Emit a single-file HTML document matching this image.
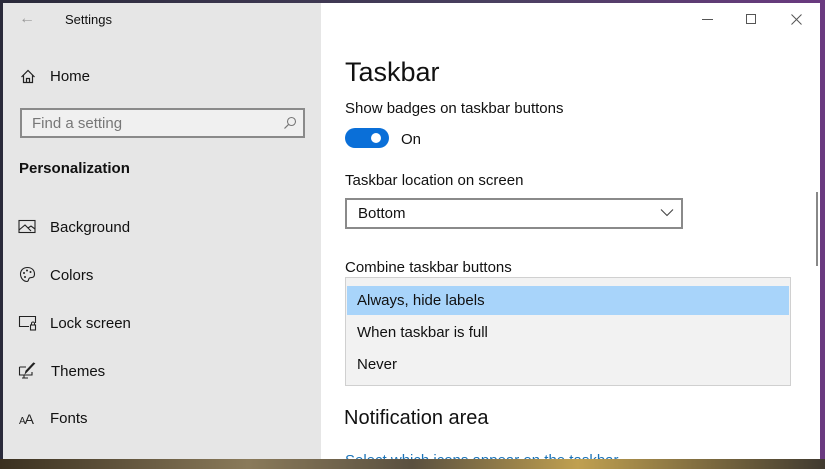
<!DOCTYPE html><html><head><style>
*{margin:0;padding:0;box-sizing:border-box}
body{width:825px;height:469px;overflow:hidden;position:relative;background:linear-gradient(90deg,#2a2a3a,#4a4060 60%,#6a3a80);font-family:"Liberation Sans",sans-serif;color:#111}
.a{position:absolute;white-space:nowrap}
#bot{position:absolute;left:0;top:459px;width:825px;height:10px;background:linear-gradient(90deg,#3a3020,#8a7a5a 30%,#5a5040 50%,#c0a050 70%,#403a30)}
#left{position:absolute;left:3px;top:3px;width:318px;height:456px;background:#e6e6e6}
#right{position:absolute;left:321px;top:3px;width:499px;height:456px;background:#fff}
.nav{font-size:15px;color:#111}
</style></head><body>
<div id="bot"></div>
<div id="left"></div><div id="right"></div>
<div class="a" style="left:19px;top:10px;font-size:16px;color:#999">&larr;</div>
<div class="a" style="left:65px;top:12px;font-size:13px">Settings</div>
<svg class="a" style="left:20px;top:69px" width="16" height="15" viewBox="0 0 16 15"><path d="M1.5 8 L8 1.5 L14.5 8 M3.5 6 V13.5 H12.5 V6 M6.5 13.5 V9.5 H9.5 V13.5" fill="none" stroke="#222" stroke-width="1.2"/></svg>
<div class="a nav" style="left:50px;top:68px">Home</div>
<div class="a" style="left:20px;top:108px;width:285px;height:30px;border:2px solid #8a8a8a;background:#f0f0f0"></div>
<div class="a" style="left:32px;top:115px;font-size:15px;color:#777">Find a setting</div>
<svg class="a" style="left:283px;top:116px" width="14" height="14" viewBox="0 0 14 14"><circle cx="8.5" cy="5.5" r="4" fill="none" stroke="#777" stroke-width="1.1"/><path d="M5.6 8.4 L1.5 12.5" stroke="#777" stroke-width="1.2"/></svg>
<div class="a" style="left:19px;top:160px;font-size:15px;font-weight:bold">Personalization</div>
<svg class="a" style="left:18px;top:219px" width="18" height="15" viewBox="0 0 18 15"><rect x="1" y="1.5" width="16" height="12" fill="none" stroke="#222" stroke-width="1.1"/><path d="M1 11 L7 6 L13 12 M10 9 L13 7 L17 10" fill="none" stroke="#222" stroke-width="1.1"/></svg>
<div class="a nav" style="left:50px;top:219px">Background</div>
<svg class="a" style="left:19px;top:266px" width="17" height="17" viewBox="0 0 17 17"><path d="M8.5 1.5 C4 1.5 1.5 4.5 1.5 8 C1.5 12 4.5 15.5 8 15.5 C10 15.5 9 13 10.5 12 C12 11 15.5 12.5 15.5 8 C15.5 4 12.5 1.5 8.5 1.5Z" fill="none" stroke="#222" stroke-width="1.1"/><circle cx="5" cy="7" r="1" fill="#222"/><circle cx="8" cy="4.5" r="1" fill="#222"/><circle cx="11.5" cy="6" r="1" fill="#222"/><circle cx="6" cy="11" r="1" fill="#222"/></svg>
<div class="a nav" style="left:50px;top:267px">Colors</div>
<svg class="a" style="left:18px;top:315px" width="19" height="16" viewBox="0 0 19 16"><path d="M11 11.5 H1.5 V1.5 H17.5 V8" fill="none" stroke="#222" stroke-width="1.1"/><rect x="12.5" y="10" width="5" height="5" fill="none" stroke="#222" stroke-width="1.1"/><path d="M13.5 10 V8.5 A1.5 1.5 0 0 1 16.5 8.5 V10" fill="none" stroke="#222"/></svg>
<div class="a nav" style="left:50px;top:315px">Lock screen</div>
<svg class="a" style="left:18px;top:362px" width="18" height="17" viewBox="0 0 18 17"><path d="M1.5 5 H8 M1.5 5 V13 H14 V10 M6 13 V16 M4 16 H10" fill="none" stroke="#222" stroke-width="1.1"/><path d="M16.5 1.5 L9 9.5 L7.5 11 L8 9 L15.5 1 Z" fill="none" stroke="#222" stroke-width="1.1"/></svg>
<div class="a nav" style="left:51px;top:363px">Themes</div>
<div class="a" style="left:19px;top:411px;font-size:10px;color:#222">A<span style="font-size:14px;margin-left:-1px">A</span></div>
<div class="a nav" style="left:50px;top:410px">Fonts</div>
<div class="a" style="left:702px;top:19px;width:11px;height:1px;background:#555"></div>
<div class="a" style="left:746px;top:14px;width:10px;height:10px;border:1px solid #555"></div>
<svg class="a" style="left:791px;top:14px" width="11" height="11" viewBox="0 0 11 11"><path d="M0.5 0.5 L10.5 10.5 M10.5 0.5 L0.5 10.5" stroke="#555" stroke-width="1"/></svg>
<div class="a" style="left:816px;top:192px;width:2px;height:74px;background:#888"></div>
<div class="a" style="left:345px;top:57px;font-size:27px">Taskbar</div>
<div class="a" style="left:345px;top:100px;font-size:15px">Show badges on taskbar buttons</div>
<div class="a" style="left:345px;top:128px;width:44px;height:20px;border-radius:10px;background:#0a6fd8"></div>
<div class="a" style="left:371px;top:133px;width:10px;height:10px;border-radius:5px;background:#fff"></div>
<div class="a" style="left:401px;top:131px;font-size:15px">On</div>
<div class="a" style="left:345px;top:172px;font-size:15px">Taskbar location on screen</div>
<div class="a" style="left:345px;top:198px;width:338px;height:31px;border:2px solid #8a8a8a;background:#fff"></div>
<div class="a" style="left:358px;top:205px;font-size:15px">Bottom</div>
<svg class="a" style="left:660px;top:208px" width="14" height="9" viewBox="0 0 14 9"><path d="M1 1.5 L7 7.5 L13 1.5" fill="none" stroke="#444" stroke-width="1.1"/></svg>
<div class="a" style="left:345px;top:259px;font-size:15px">Combine taskbar buttons</div>
<div class="a" style="left:345px;top:277px;width:446px;height:109px;border:1px solid #d0d0d0;background:#f2f2f2"></div>
<div class="a" style="left:347px;top:286px;width:442px;height:29px;background:#a8d4fa"></div>
<div class="a" style="left:357px;top:292px;font-size:15px">Always, hide labels</div>
<div class="a" style="left:357px;top:324px;font-size:15px">When taskbar is full</div>
<div class="a" style="left:357px;top:356px;font-size:15px">Never</div>
<div class="a" style="left:344px;top:407px;font-size:20px">Notification area</div>
<div class="a" style="left:345px;top:451px;font-size:15px;color:#1a73b8;height:8px;overflow:hidden;line-height:19px">Select which icons appear on the taskbar</div>
</body></html>
